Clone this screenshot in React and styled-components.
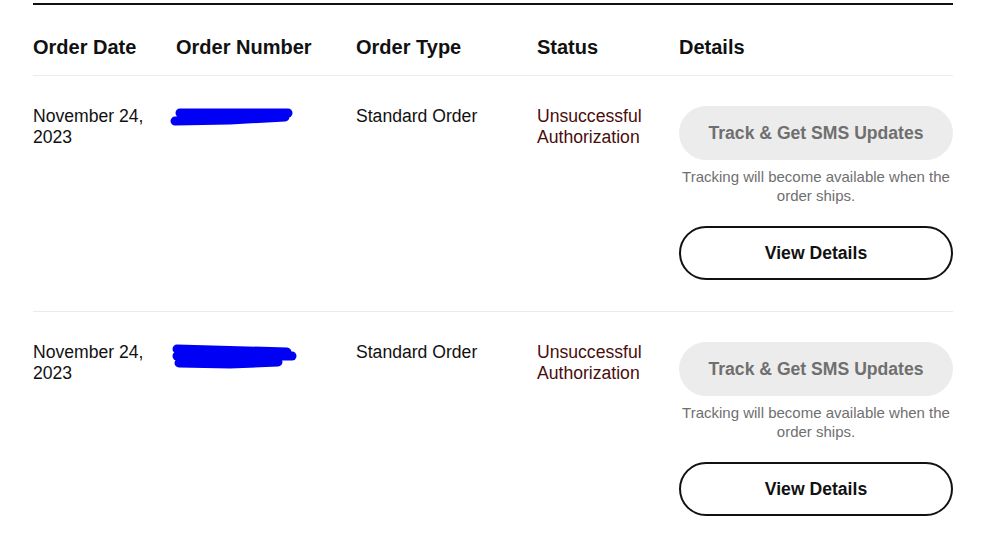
import React from 'react';
import styled, { createGlobalStyle } from 'styled-components';

const GlobalStyle = createGlobalStyle`
  body {
    margin: 0;
    background: #fff;
    font-family: "Liberation Sans", Arial, sans-serif;
    color: #111;
  }
`;

const Page = styled.div`
  padding: 3px 0 0 33px;
`;

const Table = styled.div`
  width: 920px;
  border-top: 2px solid #111;
`;

const Grid = styled.div`
  display: grid;
  grid-template-columns: 143px 180px 181px 142px 274px;
  border-bottom: 1px solid #ebebeb;
`;

const HeaderRow = styled(Grid)`
  padding: 30px 0 16px;
  align-items: center;
`;

const HeadCell = styled.div`
  font-size: 20px;
  line-height: 24px;
  font-weight: 700;
  color: #111;
`;

const Row = styled(Grid)`
  padding: 30px 0 31px;
  align-items: start;

  &:last-child {
    border-bottom: none;
  }
`;

const Cell = styled.div`
  font-size: 17.6px;
  line-height: 21px;
  color: ${({ $status }) => ($status ? '#4a0d0d' : '#111')};
`;

const Scribble = styled.svg`
  display: block;
  margin-left: -6px;
  margin-top: ${({ $top }) => $top}px;
`;

const Details = styled.div`
  display: flex;
  flex-direction: column;
  align-items: stretch;
`;

const PillButton = styled.button`
  height: 54px;
  border-radius: 27px;
  font-family: inherit;
  font-size: 17.6px;
  font-weight: 700;
  cursor: pointer;
  ${({ $outline }) => ($outline
    ? 'background: #fff; border: 2px solid #111; color: #111;'
    : 'background: #ececec; border: none; color: #6f6f6f;')}
`;

const Note = styled.p`
  margin: 7px 0 21px;
  text-align: center;
  font-size: 15px;
  line-height: 19px;
  color: #6f6f6f;
`;

const scribbles = [
  {
    top: 2,
    h: 20,
    strokes: [
      'M10 5 L118 5',
      'M5 13 L60 12 L115 9',
    ],
  },
  {
    top: 2,
    h: 30,
    strokes: [
      'M7 5 L117 8',
      'M7 12 L122 12',
      'M9 19 L60 20 L108 18',
    ],
  },
];

const orders = [
  { type: 'Standard Order' },
  { type: 'Standard Order' },
];

const App = () => (
  <Page>
    <GlobalStyle />
    <Table>
      <HeaderRow>
        <HeadCell>Order Date</HeadCell>
        <HeadCell>Order Number</HeadCell>
        <HeadCell>Order Type</HeadCell>
        <HeadCell>Status</HeadCell>
        <HeadCell>Details</HeadCell>
      </HeaderRow>
      {orders.map((order, i) => (
        <Row key={i}>
          <Cell>
            November 24,
            <br />
            2023
          </Cell>
          <Cell>
            <Scribble $top={scribbles[i].top} width="130" height={scribbles[i].h}>
              {scribbles[i].strokes.map((d) => (
                <path key={d} d={d} stroke="#0000f5" strokeWidth="9" strokeLinecap="round" strokeLinejoin="round" fill="none" />
              ))}
            </Scribble>
          </Cell>
          <Cell>{order.type}</Cell>
          <Cell $status>
            Unsuccessful
            <br />
            Authorization
          </Cell>
          <Details>
            <PillButton>Track &amp; Get SMS Updates</PillButton>
            <Note>
              Tracking will become available when the
              <br />
              order ships.
            </Note>
            <PillButton $outline>View Details</PillButton>
          </Details>
        </Row>
      ))}
    </Table>
  </Page>
);

export default App;
